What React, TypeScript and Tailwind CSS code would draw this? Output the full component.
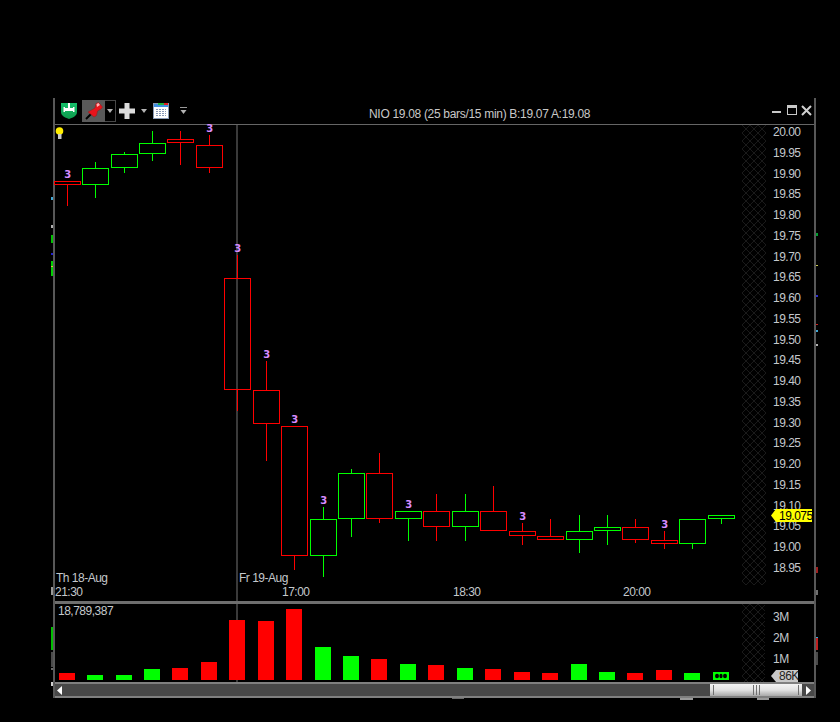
const RED = "#ff0000";
const GREEN = "#00ff00";

// cx, body top, body bottom, wick top, wick bottom, colour, y of the "3" marker
const candles: [number, number, number, number, number, string, number?][] = [
  [67, 181, 184, 181, 206, RED, 174],
  [95, 168, 184, 162, 198, GREEN],
  [124, 154, 167, 152, 173, GREEN],
  [152, 143, 153, 131, 161, GREEN],
  [180, 139, 142, 131, 165, RED],
  [209, 145, 167, 135, 173, RED, 128],
  [237, 278, 389, 255, 411, RED, 248.5],
  [266, 390, 423, 361, 461, RED, 354.5],
  [294, 426, 555, 426, 570, RED, 419.5],
  [323, 519, 555, 507, 577, GREEN, 500],
  [351, 473, 518, 469, 537, GREEN],
  [379, 473, 518, 453, 523, RED],
  [408, 511, 518, 511, 541, GREEN, 504],
  [436, 511, 526, 494, 541, RED],
  [465, 511, 526, 494, 541, GREEN],
  [493, 511, 530, 486, 530, RED],
  [522, 531, 535, 523, 545, RED, 516.5],
  [550, 536, 539, 519, 539, RED],
  [579, 531, 539, 515, 553, GREEN],
  [607, 527, 530, 515, 545, GREEN],
  [635, 527, 539, 519, 543, RED],
  [664, 540, 543, 531, 549, RED, 524.5],
  [692, 519, 543, 519, 549, GREEN],
  [721, 515, 518, 515, 524, GREEN],
];

// left edge, top, colour
const volumes: [number, number, string][] = [
  [59, 673, RED], [87, 675, GREEN], [116, 675, GREEN], [144, 669, GREEN],
  [172, 668, RED], [201, 662, RED], [229, 620, RED], [258, 621, RED],
  [286, 609, RED], [315, 647, GREEN], [343, 656, GREEN], [371, 659, RED],
  [400, 664, GREEN], [428, 665, RED], [457, 668, GREEN], [485, 669, RED],
  [514, 672, RED], [542, 673, RED], [571, 664, GREEN], [599, 672, GREEN],
  [627, 673, RED], [656, 670, RED], [684, 673, GREEN],
];

const prices = ["20.00", "19.95", "19.90", "19.85", "19.80", "19.75", "19.70", "19.65", "19.60", "19.55", "19.50", "19.45", "19.40", "19.35", "19.30", "19.25", "19.20", "19.15", "19.10", "19.05", "19.00", "18.95"];

// bits of the chart window underneath that show past the edges
const slivers: [number, number, number, number, string][] = [
  [51, 197, 2, 3, "#3fa7d6"], [51, 225, 2, 3, "#b0b0b0"], [51, 235, 2, 8, "#00c000"],
  [51, 253, 2, 2, "#2020d0"], [51, 261, 2, 15, "#00d000"], [51, 266, 2, 1, "#e0c040"],
  [51, 587, 2, 8, "#9a9a9a"], [51, 627, 2, 23, "#00c000"], [51, 652, 2, 15, "#4a4a4a"],
  [51, 668, 2, 2, "#6a6a6a"], [51, 682, 2, 4, "#d0d0d0"],
  [816, 233, 2, 3, "#00a030"], [816, 265, 2, 1, "#c8c850"], [816, 295, 2, 2, "#3030d0"],
  [816, 324, 2, 1, "#d02020"], [816, 330, 2, 2, "#3fa7d6"], [816, 344, 2, 2, "#b0b0b0"],
  [816, 567, 2, 6, "#a02020"], [816, 590, 2, 5, "#707070"], [816, 637, 2, 1, "#3fa7d6"],
  [816, 638, 2, 12, "#c02020"], [816, 652, 2, 13, "#4a4a4a"],
  [680, 698, 13, 2, "#9a9a9a"], [757, 698, 12, 2, "#9a9a9a"], [452, 698, 12, 1, "#6a6a6a"],
];

function Hatch({ id, y, height }: { id: string; y: number; height: number }) {
  return (
    <>
      <defs>
        <pattern id={id} x="742" y={y} width="8" height="8" patternUnits="userSpaceOnUse">
          <path d="M0 0L8 8M8 0L0 8" stroke="#1a1a1a" strokeWidth="1" />
        </pattern>
      </defs>
      <rect x="742" y={y} width="24" height={height} fill={`url(#${id})`} />
    </>
  );
}

function PriceChart() {
  return (
    <svg className="col-start-1 row-start-1 overflow-visible" width="710" height="476" viewBox="55 125 710 476">
      <Hatch id="hatch-price" y={125} height={460} />
      <rect x="236" y="125" width="2" height="476" fill="#3a3a3a" />
      {candles.map(([cx, top, bottom, wickTop, wickBottom, color, marker]) => (
        <g key={cx}>
          {wickTop < top && <line x1={cx + 0.5} x2={cx + 0.5} y1={wickTop} y2={top} stroke={color} />}
          {wickBottom > bottom && <line x1={cx + 0.5} x2={cx + 0.5} y1={bottom + 1} y2={wickBottom} stroke={color} />}
          <rect x={cx - 12.5} y={top + 0.5} width="26" height={bottom - top} fill="none" stroke={color} />
          {marker && (
            <text x={cx + 0.5} y={marker + 3.7} textAnchor="middle" fill="#d88cff" fontSize="10" fontWeight="700" fontFamily="DejaVu Sans, sans-serif">
              3
            </text>
          )}
        </g>
      ))}
      {/* bulb */}
      <circle cx="59.5" cy="131" r="3.8" fill="#ffee00" />
      <rect x="58" y="134" width="3.5" height="5" fill="#c8c8c8" />
    </svg>
  );
}

function VolumeChart() {
  return (
    <svg className="col-start-1 row-start-1" width="710" height="78" viewBox="55 604 710 78">
      <Hatch id="hatch-volume" y={604} height={78} />
      <rect x="236" y="604" width="2" height="78" fill="#3a3a3a" />
      {volumes.map(([x, top, color]) => (
        <rect key={x} x={x} y={top} width="16" height={680 - top} fill={color} />
      ))}
      {/* current bar, still forming */}
      <rect x="713" y="672" width="16" height="8" fill={GREEN} />
      <ellipse cx="717" cy="676" rx="2" ry="2.2" fill="#000" />
      <ellipse cx="721" cy="676" rx="1.6" ry="2.2" fill="#000" />
      <ellipse cx="725" cy="676" rx="2" ry="2.2" fill="#000" />
    </svg>
  );
}

function Shield() {
  return (
    <svg width="16" height="16" viewBox="0 0 16 16" className="ml-[6px] shrink-0">
      <defs>
        <linearGradient id="shield" x1="0" y1="0" x2="0" y2="1">
          <stop offset="0" stopColor="#15c06a" />
          <stop offset="1" stopColor="#0e9a4c" />
        </linearGradient>
      </defs>
      <path d="M0 0H16V9C16 13 11 15 8 16C5 15 0 13 0 9Z" fill="url(#shield)" />
      <path d="M7 0H9V5H12V4H13.5V9H12V8H4V9H2.5V4H4V5H7Z" fill="#fff" />
    </svg>
  );
}

function Pin() {
  return (
    <svg width="22" height="22" viewBox="0 0 22 22">
      <path d="M4 19L10 13" stroke="#000" strokeWidth="2" />
      <path d="M6 12L10.5 9.5L13 8L14 3.5L16.5 2.5L20.5 7L19 9L15.5 11L14.5 15.5L12 17Z" fill="#e8141c" stroke="#8a2020" strokeWidth="0.5" />
      <path d="M14.5 4L16.5 3L18 5L15 7Z" fill="#ffb4b4" />
    </svg>
  );
}

function Calendar() {
  return (
    <svg width="16" height="16" viewBox="0 0 16 16" className="ml-[6px] shrink-0">
      <rect x="0" y="0" width="16" height="16" fill="#fff" />
      <rect x="0.5" y="0.5" width="15" height="15" fill="none" stroke="#8a9ab5" />
      <rect x="1" y="1" width="14" height="3" fill="#3f8fe0" />
      <rect x="5" y="0" width="6" height="2" fill="#20b040" />
      <rect x="11" y="0" width="4" height="2" fill="#e02020" />
      <path d="M3 6.5H13M3 8.5H13M3 10.5H13M3 12.5H13" stroke="#8898b8" />
      <path d="M5.5 6V13M8.5 6V13M11.5 6V13" stroke="#fff" />
    </svg>
  );
}

function Caret({ className }: { className: string }) {
  return (
    <svg width="6" height="4" viewBox="0 0 6 4" className={className}>
      <path d="M0 0H6L3 4Z" fill="#b4b4b4" />
    </svg>
  );
}

function TitleBar() {
  return (
    <div className="flex h-[27px] items-center border-b border-[#666666]">
      <Shield />
      <div className="ml-[5px] flex h-[22px] w-[34px] shrink-0 border border-[#484848]">
        <div className="-m-px h-[22px] w-[23px] shrink-0 bg-[#5a5a5a]">
          <Pin />
        </div>
        <div className="flex flex-1 items-center justify-center">
          <Caret className="" />
        </div>
      </div>
      <svg width="16" height="16" viewBox="0 0 16 16" className="ml-[3px] shrink-0">
        <path d="M5.5 0H10.5V5.5H16V10.5H10.5V16H5.5V10.5H0V5.5H5.5Z" fill="#dcdcdc" />
      </svg>
      <Caret className="ml-[6px] shrink-0" />
      <Calendar />
      <svg width="7" height="8" viewBox="0 0 7 8" className="ml-[11px] shrink-0">
        <path d="M0 0.5H7" stroke="#9a9a9a" />
        <path d="M0.5 3H6.5L3.5 7Z" fill="#b4b4b4" />
      </svg>
      <span className="ml-[182px] mt-[5px] whitespace-nowrap text-[12px] tracking-[-0.31px] text-[#c8c8c8]">NIO 19.08 (25 bars/15 min) B:19.07 A:19.08</span>
      <div className="-mt-[2px] ml-auto mr-[2px] flex items-center">
        <div className="mt-[3px] h-[2px] w-[9px] bg-[#c8c8c8]" />
        <div className="ml-[6px] h-[10px] w-[10px] border border-t-[3px] border-[#c8c8c8]" />
        <svg width="11" height="11" viewBox="0 0 11 11" className="ml-[4px]">
          <path d="M1 1L10 10M10 1L1 10" stroke="#d0d0d0" strokeWidth="2" />
        </svg>
      </div>
    </div>
  );
}

function Scrollbar() {
  return (
    <div className="flex h-[16px] items-stretch border-y-2 border-[#808080] bg-[#484848]">
      <div className="flex w-[655px] items-center pl-[2px]">
        <svg width="5" height="9" viewBox="0 0 5 9">
          <path d="M5 0V9L0 4.5Z" fill="#fff" />
        </svg>
      </div>
      <div className="flex w-[92px] items-center justify-between bg-gradient-to-b from-[#f4f4f4] via-[#e2e2e2] to-[#a8a8a8] px-[3px]">
        <div className="h-[10px] w-px bg-[#707070]" />
        <div className="flex gap-[2px]">
          <div className="h-[10px] w-px bg-[#707070]" />
          <div className="h-[10px] w-px bg-[#707070]" />
          <div className="h-[10px] w-px bg-[#707070]" />
        </div>
        <div className="h-[10px] w-px bg-[#707070]" />
      </div>
      <div className="flex flex-1 items-center justify-center">
        <svg width="5" height="9" viewBox="0 0 5 9">
          <path d="M0 0V9L5 4.5Z" fill="#fff" />
        </svg>
      </div>
    </div>
  );
}

export default function App() {
  return (
    <div className="relative h-[722px] w-[840px] overflow-hidden bg-black pl-[53px] pt-[98px] font-['Liberation_Sans',Arial,sans-serif] text-[12px] leading-[14px] tracking-[-0.5px] text-[#c4c8cc]">
      <svg className="absolute left-0 top-0" width="840" height="722">
        {slivers.map(([x, y, w, h, color]) => (
          <rect key={`${x}-${y}`} x={x} y={y} width={w} height={h} fill={color} />
        ))}
      </svg>

      <div className="relative h-[600px] w-[763px] border-x-2 border-[#585858] bg-black">
        <TitleBar />

        {/* price pane */}
        <div className="flex h-[476px]">
          <div className="grid w-[710px] shrink-0">
            <PriceChart />
            <div className="col-start-1 row-start-1 flex flex-col justify-end pb-[2px]">
              <div className="flex pl-px">
                <span className="w-[183px]">Th 18-Aug</span>
                <span>Fr 19-Aug</span>
              </div>
              <div className="flex">
                <span className="w-[227px]">21:30</span>
                <span className="w-[171px]">17:00</span>
                <span className="w-[170px]">18:30</span>
                <span>20:00</span>
              </div>
            </div>
          </div>
          <div className="relative flex-1 pl-[8px]">
            <div className="flex flex-col gap-[6.76px]">
              {prices.map((p) => (
                <span key={p}>{p}</span>
              ))}
            </div>
            <div className="absolute left-[6px] top-[384px] h-[13px] w-[41px] bg-[#ffff00] pl-[8px] text-black [clip-path:polygon(5px_0,100%_0,100%_100%,5px_100%,0_50%)]">
              19.075
            </div>
          </div>
        </div>

        <div className="h-[3px] bg-[#6e6e6e]" />

        {/* volume pane */}
        <div className="flex h-[78px]">
          <div className="grid w-[710px] shrink-0">
            <VolumeChart />
            <div className="col-start-1 row-start-1 pl-[3px]">18,789,387</div>
          </div>
          <div className="relative flex flex-1 flex-col gap-[7px] pl-[8px] pt-[6px]">
            <span>3M</span>
            <span>2M</span>
            <span>1M</span>
            <div className="absolute left-[6px] top-[66px] h-[12px] w-[27px] bg-[#c8c8c8] pl-[8px] leading-[13px] text-[#222222] [clip-path:polygon(5px_0,100%_0,100%_100%,5px_100%,0_50%)]">
              86K
            </div>
          </div>
        </div>

        <Scrollbar />
      </div>
    </div>
  );
}
